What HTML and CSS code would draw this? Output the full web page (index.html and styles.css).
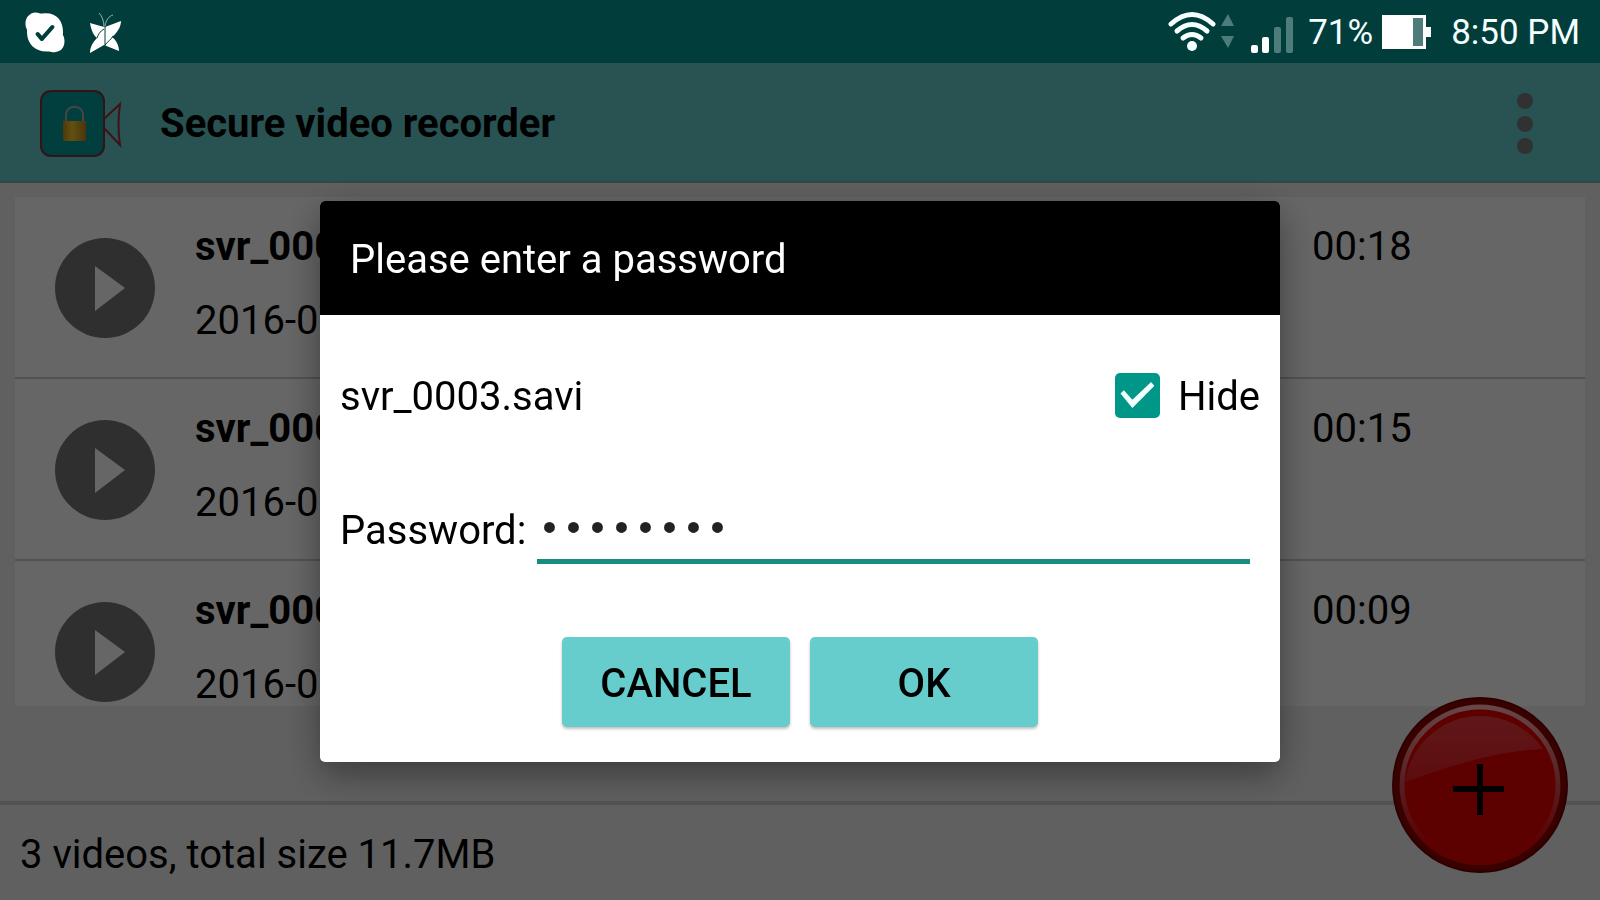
FILE: index.html
```html
<!DOCTYPE html>
<html lang="en">
<head>
<meta charset="utf-8">
<title>Secure video recorder</title>
<link rel="stylesheet" href="styles.css">
</head>
<body>
<div class="status">
  <div class="status-side">
    <svg width="40" height="41" viewBox="1 0 38 41" preserveAspectRatio="none" aria-hidden="true"><path d="M11 .5C14 .5 15 2 18 1.500C32 0 38 10 37 23C40 28 39 39 30 40C27 41 26 39 23 39.500C9 40 2 30 3 18C-1 10 3 1 11 .5Z" fill="#fff"/><path d="M13 22l4 5 10-12" fill="none" stroke="#003d3b" stroke-width="4" stroke-linecap="round" stroke-linejoin="round"/></svg>
    <svg width="31" height="42" viewBox="0 0 31 42" aria-hidden="true"><path d="M14 15L0 11C1 18 4 24 7 26C2 31 0 36 0 41L14 33L29 39C29 33 26 28 22 25C27 21 31 15 31 9L15 15Z" fill="#fff"/><path d="M15 14v20M14 17C10 19 8 23 7 26M15 33C18 29 21 28 23 24" fill="none" stroke="#003d3b"/><path d="M14 15C14 9 12 4 9 1M15 14C16 8 19 4 23 3" fill="none" stroke="#8fb5b4"/></svg>
  </div>
  <div class="status-side">
    <svg class="wifi" width="66" height="42" viewBox="0 0 66 42" aria-hidden="true"><g fill="none" stroke="#f4ffff" stroke-width="5" stroke-linecap="round"><path d="M3 13Q24-6 45 13"/><path d="M9 20Q24 7 39 20"/><path d="M15 27Q24 20 33 27"/></g><circle cx="24" cy="35" r="5" fill="#f4ffff"/><path d="M53 15l7-12 6 12zM53 25h13l-6 12z" fill="#4d7c7a"/></svg>
    <svg class="signal" width="44" height="36" viewBox="0 0 44 36" aria-hidden="true"><rect x="1" y="28" width="7" height="8" rx="2" fill="#fff"/><rect x="12" y="20" width="7" height="16" rx="2" fill="#fff"/><rect x="24" y="10" width="7" height="26" rx="2" fill="#4d7c7a"/><rect x="36" y="0" width="7" height="36" rx="2" fill="#4d7c7a"/></svg>
    <span>71%</span>
    <svg class="battery" width="50" height="34" viewBox="0 0 50 34" aria-hidden="true"><path d="M1 0h44v12h5v10h-5v12H1z" fill="#fff"/><path d="M32 3h10v28H32z" fill="#4d7c7a"/></svg>
    <span>8:50 PM</span>
  </div>
</div>
<header class="appbar">
  <svg width="82" height="68" viewBox="0 0 82 68" aria-hidden="true"><defs><linearGradient id="gold" x2="1"><stop offset="0" stop-color="#c98c1c"/><stop offset=".4" stop-color="#f7c92c"/><stop offset="1" stop-color="#b8861c"/></linearGradient></defs><path d="M64 29L80 14Q77 34 80 55L64 38" fill="none" stroke="#a03038" stroke-width="2"/><rect x="1" y="1" width="63" height="65" rx="10" fill="#009d98" stroke="#803038" stroke-width="2"/><path d="M26 34V25c0-11 17-11 17 0v9" fill="none" stroke="#a8b0a8" stroke-width="2"/><rect x="23" y="31" width="23" height="20" fill="url(#gold)"/></svg>
  <h1>Secure video recorder</h1>
  <button class="more" aria-label="More options"><svg width="16" height="62" viewBox="0 0 16 62"><g fill="#7a7a7a"><circle cx="8" cy="8" r="8"/><circle cx="8" cy="31" r="8"/><circle cx="8" cy="53" r="8"/></g></svg></button>
</header>
<main class="content">
  <ul class="videos">
    <li class="video"><button class="play" aria-label="Play"><svg width="100" height="100" viewBox="0 0 100 100"><circle cx="50" cy="50" r="50" fill="#777"/><path d="M40 28L70 50L40 73z" fill="#fff"/></svg></button><div><div class="name">svr_0003.savi</div><div>2016-07-18</div></div><div>00:18</div></li>
    <li class="video"><button class="play" aria-label="Play"><svg width="100" height="100" viewBox="0 0 100 100"><circle cx="50" cy="50" r="50" fill="#777"/><path d="M40 28L70 50L40 73z" fill="#fff"/></svg></button><div><div class="name">svr_0002.savi</div><div>2016-07-18</div></div><div>00:15</div></li>
    <li class="video"><button class="play" aria-label="Play"><svg width="100" height="100" viewBox="0 0 100 100"><circle cx="50" cy="50" r="50" fill="#777"/><path d="M40 28L70 50L40 73z" fill="#fff"/></svg></button><div><div class="name">svr_0001.savi</div><div>2016-07-18</div></div><div>00:09</div></li>
  </ul>
</main>
<footer class="summary">3 videos, total size 11.7MB</footer>
<button class="record" aria-label="Record video"><svg width="176" height="176" viewBox="0 0 176 176"><defs><linearGradient id="ring" x2="0" y2="1"><stop offset="0" stop-color="#ffb0b0"/><stop offset=".5" stop-color="#d84c54"/><stop offset=".9" stop-color="#e60000"/></linearGradient><linearGradient id="gloss" x2="0" y2="1"><stop offset="0" stop-color="#f03c40"/><stop offset="1" stop-color="#e82024"/></linearGradient></defs><circle cx="88" cy="88" r="87" fill="#900000" stroke="#700000" stroke-width="2"/><circle cx="88" cy="88" r="78" fill="#e80000" stroke="url(#ring)" stroke-width="5"/><path d="M13 85A76 76 0 0 1 151 52C105 54 60 68 13 85z" fill="url(#gloss)"/><path d="M88 67v51M61 92h51" stroke="#000" stroke-width="6"/></svg></button>
<div class="scrim">
  <form class="dialog" role="dialog" aria-labelledby="dialog-title">
    <h2 id="dialog-title">Please enter a password</h2>
    <div class="dialog-body">
      <div class="file-row"><span>svr_0003.savi</span><label class="hide"><input type="checkbox" checked>Hide</label></div>
      <div class="password-row"><label for="password">Password:</label><input id="password" type="password" value="password"></div>
      <div class="actions"><button type="button">CANCEL</button><button type="button">OK</button></div>
    </div>
  </form>
</div>
</body>
</html>
```
FILE: styles.css
```css
* { box-sizing: border-box; }
body { margin: 0; height: 100vh; display: flex; flex-direction: column; overflow: hidden; background: #f0f0f0; color: #000; font: 40px/60px Roboto, sans-serif; }
button { border: 0; padding: 0; background: none; font: inherit; color: inherit; }
svg { display: block; }
.status { height: 63px; padding: 2px 20px 0 25px; display: flex; justify-content: space-between; align-items: center; background: #003d3b; color: #f4ffff; font-size: 35px; }
.status-side { display: flex; align-items: center; gap: 8px; }
.status-side:first-child { gap: 25px; }
.wifi { margin-top: -2px; }
.signal { margin: 4px 6px 0 8px; }
.battery { margin: -2px 12px 0 0; }
.appbar { height: 120px; padding: 4px 67px 0 40px; display: flex; align-items: center; gap: 38px; background: #66cccc; border-bottom: 2px solid #79b4b4; }
.appbar h1 { flex: 1; margin: 0; font-size: 40px; font-weight: 700; }
.content { flex: 1; min-height: 0; padding: 14px 15px 95px; }
.videos { height: 100%; margin: 0; padding: 0; list-style: none; overflow: hidden; background: #fff; }
.video { height: 182px; padding: 20px 40px 0; display: grid; grid-template-columns: 100px 1fr 233px; column-gap: 40px; border-bottom: 2px solid #ccc; }
.play { height: 100px; margin-top: 21px; }
.name { font-weight: 700; margin-bottom: 14px; }
.summary { height: 99px; padding: 20px 20px 0; border-top: 4px solid #ccc; }
.record { position: absolute; right: 32px; bottom: 27px; border-radius: 50%; }
.scrim { position: fixed; inset: 63px 0 0; display: flex; align-items: center; justify-content: center; background: rgba(0, 0, 0, .6); }
.dialog { width: 60%; border-radius: 5px; overflow: hidden; background: #fff; box-shadow: 0 12px 36px rgba(0, 0, 0, .4); }
.dialog h2 { margin: 0; padding: 29px 30px 25px; background: #000; color: #fff; font-size: 40px; font-weight: 400; }
.dialog-body { padding: 52px 20px 35px; }
.file-row { display: flex; justify-content: space-between; }
.hide { display: flex; align-items: center; gap: 18px; }
.hide input { appearance: none; width: 45px; height: 45px; margin: 0 0 4px; border-radius: 5px; background: #009688; display: grid; place-items: center; }
.hide input:checked::before { content: ""; width: 34px; height: 26px; background: #f4ffff; clip-path: polygon(0 44%, 10% 32%, 35% 68%, 90% 0, 100% 14%, 35% 100%); }
.password-row { margin-top: 74px; padding-right: 10px; display: flex; gap: 11px; }
.password-row input { flex: 1; min-width: 0; height: 63px; padding: 0; border: 0; border-bottom: 5px solid #188c7e; outline: 0; background: none; color: #222; font: 40px/58px "Liberation Mono", monospace; }
.actions { margin-top: 73px; display: flex; justify-content: center; gap: 20px; }
.actions button { width: 228px; height: 90px; padding-top: 3px; border-radius: 5px; background: #66cccc; font-weight: 500; box-shadow: 0 2px 3px rgba(0, 0, 0, .25); }
```
